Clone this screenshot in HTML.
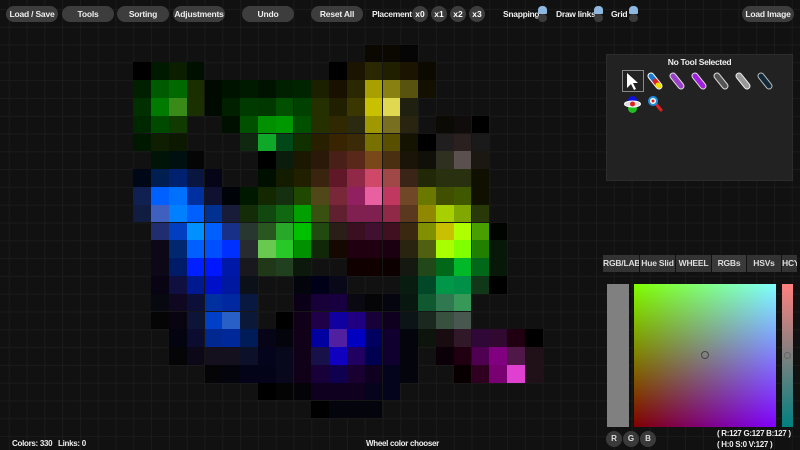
<!DOCTYPE html>
<html><head><meta charset="utf-8">
<style>
*{margin:0;padding:0;box-sizing:border-box}
html,body{width:800px;height:450px;overflow:hidden;background:#111;font-family:"Liberation Sans",sans-serif;color:#fff}
#bg{position:absolute;left:0;top:0;width:800px;height:450px;
background-image:linear-gradient(to right,#1b1b1b 1px,transparent 1px),linear-gradient(to bottom,#1b1b1b 1px,transparent 1px);
background-size:17.8px 17.8px;background-position:133.3px 62.3px}
.btn{position:absolute;top:6px;height:16px;border-radius:8px;background:#3d3d3d;font-size:8.5px;font-weight:bold;text-align:center;line-height:16px;color:#eee;white-space:nowrap;overflow:visible;letter-spacing:-0.2px}
.c{position:absolute;top:6px;width:16px;height:16px;border-radius:8px;background:#3d3d3d;font-size:8.5px;font-weight:bold;text-align:center;line-height:16px;white-space:nowrap}
.t{position:absolute;font-size:8.5px;font-weight:bold;color:#eee;white-space:nowrap;letter-spacing:-0.3px}
.tog{position:absolute;top:6px;width:9px;height:16px}
.tog i{display:block;width:9px;height:8px;background:#8fb8e0;border-radius:4px 4px 1px 1px}
.tog b{display:block;width:9px;height:8px;background:#3a3a3a;border-radius:4px}
.cell{position:absolute;width:17.8px;height:17.8px}
.tab{position:absolute;top:255px;height:17px;background:#333;font-size:8.5px;font-weight:bold;text-align:center;line-height:17px;color:#ddd;white-space:nowrap;overflow:hidden;letter-spacing:-0.2px}
.rgb{position:absolute;top:431px;width:16px;height:16px;border-radius:8px;background:#3a3a3a;font-size:8px;font-weight:bold;text-align:center;line-height:16px;color:#ddd}
</style></head><body>
<div id="bg"></div>
<div id="cells"></div>

<div class="btn" style="left:6px;width:52px">Load / Save</div>
<div class="btn" style="left:62px;width:52px">Tools</div>
<div class="btn" style="left:117px;width:52px">Sorting</div>
<div class="btn" style="left:173px;width:52px">Adjustments</div>
<div class="btn" style="left:242px;width:52px">Undo</div>
<div class="btn" style="left:311px;width:52px">Reset All</div>
<div class="t" style="left:372px;top:9px">Placement</div>
<div class="c" style="left:412px">x0</div>
<div class="c" style="left:431px">x1</div>
<div class="c" style="left:450px">x2</div>
<div class="c" style="left:469px">x3</div>
<div class="t" style="left:503px;top:9px">Snapping</div>
<div class="tog" style="left:538px"><i></i><b></b></div>
<div class="t" style="left:556px;top:9px">Draw links</div>
<div class="tog" style="left:594px"><i></i><b></b></div>
<div class="t" style="left:611px;top:9px">Grid</div>
<div class="tog" style="left:629px"><i></i><b></b></div>
<div class="btn" style="left:742px;width:52px">Load Image</div>

<div style="position:absolute;left:606px;top:54px;width:187px;height:127px;background:#222;border:1px solid #2c2c2c"></div>
<div class="t" style="left:606px;width:187px;text-align:center;top:57px">No Tool Selected</div>
<div style="position:absolute;left:622px;top:70px;width:22px;height:22px;border:1px solid #888"></div>
<svg style="position:absolute;left:600px;top:60px" width="200" height="60" viewBox="600 60 200 60">
<path d="M627 73 L627 88 L631 84 L634 90 L636 89 L633 83 L638 83 Z" fill="#fff"/>
<g stroke-linecap="round">
<line x1="651" y1="76" x2="659" y2="86" stroke="#fff" stroke-width="7"/>
<line x1="651" y1="76" x2="659" y2="86" stroke="#1a7ad0" stroke-width="5"/>
<line x1="655" y1="81" x2="659" y2="86" stroke="#e02020" stroke-width="5"/>
<line x1="658" y1="85" x2="659" y2="86" stroke="#f0e000" stroke-width="5"/>
<line x1="673" y1="76" x2="681" y2="86" stroke="#ddd" stroke-width="7"/>
<line x1="673" y1="76" x2="681" y2="86" stroke="#9a40c8" stroke-width="5"/>
<line x1="695" y1="76" x2="703" y2="86" stroke="#ddd" stroke-width="7"/>
<line x1="695" y1="76" x2="703" y2="86" stroke="#a020e0" stroke-width="5"/>
<line x1="717" y1="76" x2="725" y2="86" stroke="#ddd" stroke-width="7"/>
<line x1="717" y1="76" x2="725" y2="86" stroke="#555" stroke-width="5"/>
<line x1="739" y1="76" x2="747" y2="86" stroke="#eee" stroke-width="7"/>
<line x1="739" y1="76" x2="747" y2="86" stroke="#999" stroke-width="5"/>
<line x1="761" y1="76" x2="769" y2="86" stroke="#bbb" stroke-width="7"/>
<line x1="761" y1="76" x2="769" y2="86" stroke="#102838" stroke-width="5"/>
</g>
<rect x="628" y="96" width="9" height="9" rx="4.5" fill="#1010e0"/>
<rect x="628" y="104" width="9" height="9" rx="4.5" fill="#20c020"/>
<ellipse cx="632.5" cy="104" rx="8" ry="3" fill="#ddd" stroke="#fff" stroke-width="1"/>
<circle cx="632.5" cy="104" r="2.5" fill="#e02020"/>
<line x1="656" y1="104" x2="661" y2="110" stroke="#e02020" stroke-width="3" stroke-linecap="round"/>
<circle cx="653" cy="101" r="4" fill="#fff" stroke="#1a90e0" stroke-width="2"/>
<circle cx="653" cy="101" r="1.5" fill="#e02020"/>
</svg>

<div class="tab" style="left:603px;width:36px">RGB/LAB</div>
<div class="tab" style="left:640px;width:35px">Hue Slid</div>
<div class="tab" style="left:676px;width:35px">WHEEL</div>
<div class="tab" style="left:712px;width:34px;background:#3a3a3a">RGBs</div>
<div class="tab" style="left:747px;width:34px">HSVs</div>
<div class="tab" style="left:782px;width:15px">HCY'</div>

<div style="position:absolute;left:607px;top:284px;width:22px;height:143px;background:#808080"></div>
<div style="position:absolute;left:634px;top:284px;width:142px;height:143px;background:linear-gradient(to right,#800000,#8000ff)">
<div style="position:absolute;inset:0;background:linear-gradient(to bottom,#00ff00,#000);mix-blend-mode:screen"></div></div>
<div style="position:absolute;left:701px;top:351px;width:8px;height:8px;border-radius:50%;border:1px solid #444"></div>
<div style="position:absolute;left:782px;top:284px;width:11px;height:143px;background:linear-gradient(to bottom,#ff8080,#008080)"></div>
<div style="position:absolute;left:784px;top:352px;width:7px;height:7px;border-radius:50%;border:1px solid #666"></div>

<div class="rgb" style="left:606px">R</div>
<div class="rgb" style="left:623px">G</div>
<div class="rgb" style="left:640px">B</div>
<div class="t" style="left:717px;top:429px;font-size:8px">( R:127 G:127 B:127 )</div>
<div class="t" style="left:717px;top:440px;font-size:8px">( H:0 S:0 V:127 )</div>
<div class="t" style="left:12px;top:439px;font-size:8px">Colors: 330&nbsp;&nbsp;&nbsp;Links: 0</div>
<div class="t" style="left:366px;top:439px;font-size:8px">Wheel color chooser</div>

<script>
var R={
"-1":{13:"#0a0800",14:"#0a0800",15:"#050505"},
0:["#000","#001a00","#0a1f00","#001000",,,,,,,,"#000","#1a1400","#2a2800","#202000","#1a1400","#0c0a00"],
1:["#002000","#005a00","#006a00","#1a2e00","#000a00","#001200","#001a00","#001200","#002000","#002400","#1a2000","#1a1000","#2a2800","#a8a000","#888010","#585410","#141000"],
2:["#003000","#007a00","#3a8a1a","#1a3000","#000a00","#002000","#003a00","#003800","#005000","#004000","#253000","#202000","#3a3800","#c8c000","#e0d850","#202010"],
3:["#002800","#004a00","#103a00",,,"#001000","#005000","#009000","#009800","#005000","#253000","#302800","#2a2a10","#a09800","#787020","#282410",,"#0c0a05","#100c0c","#000"],
4:["#001800","#0f1e00","#0c1800",,,,"#102810","#10a828","#004818","#103000","#281e00","#382400","#3a2a08","#787000","#585000","#141200","#000","#201e1e","#2a2020","#1a1a1a"],
5:[,"#001408","#001010","#050505",,,,"#000","#0c1c0c","#1a1800","#2a1808","#482018","#5a2818","#784818","#4a3010","#1a1408","#101008","#303020","#5a5050","#1a1810"],
6:["#000818","#001e50","#002070","#081640","#050518",,,"#001000","#141c00","#202000","#3a2410","#601828","#902848","#d04868","#a04848","#3a2418","#202808","#283010","#283010","#101000"],
7:["#102050","#0060ff","#0070ff","#0030a0","#101030","#000408","#001800","#142800","#143010","#204800","#504818","#782838","#902060","#e860a0","#c03860","#704828","#6a7800","#405000","#405800","#101000"],
8:["#101c40","#4060c0","#0080ff","#0060ff","#003090","#181c38","#142c08","#104810","#106810","#00a000","#385010","#602030","#802050","#802050","#902848","#5a3820","#908800","#a8d000","#80a800","#283808"],
9:[,"#202e70","#0040c0","#0090ff","#0060ff","#183088","#283830","#285820","#28a828","#00c000","#204a10","#2a1e18","#3a1020","#401030","#401020","#3a2810","#809000","#c8c000","#b0ff00","#48a000","#000400"],
10:[,"#0c0818","#002870","#0060ff","#0050ff","#0030ff","#282c30","#68c850","#28c828","#009000","#102808","#140800","#200010","#200010","#1a0010","#282410","#506010","#a8ff00","#80ff00","#208000","#081808"],
11:[,"#0c0818","#001c68","#0020ff","#0018ff","#0018a8","#18181e","#203818","#204020","#0c180c",,,"#100000","#100000","#0c0000","#141810","#204818","#006818","#00b828","#006818","#081808"],
12:[,"#080414","#101040","#001890","#0010c8","#0018a0","#0c1018",,,"#04040c","#000018","#080818",,,,"#081c10","#004828","#009848","#009048","#103818","#000"],
13:[,"#080810","#100820","#0c1038","#0030a0","#0028a0","#081840",,,"#0c0018","#180038","#180040","#0a0810","#050508","#050510","#081810","#105830","#307850","#389858"],
14:[,"#050505","#080510","#0c1438","#0040c8","#2860c8","#0c1838",,"#000","#100018","#200048","#1000a0","#200080","#180038","#100020","#0c1418","#1a2820","#385040","#485850"],
15:[,,"#040410","#0c0c30","#002890","#002898","#001c58","#080418","#04040c","#100018","#0000a0","#5020a0","#0000c0","#000060","#100030","#04040c","#0c140c","#180c10","#301828","#300838","#300830","#200010","#000"],
16:[,,"#050508","#0c0818","#14101e","#14101e","#0c1028","#04041c","#08081c","#100018","#181048","#1000c0","#200060","#000050","#100030","#04040c",,"#0c0008","#200010","#500050","#800080","#501848","#201018"],
17:[,,,,"#050508","#04040c","#040418","#040418","#08081c","#100018","#180038","#100050","#180030","#100020","#04041c","#04040c",,,"#080000","#300020","#780070","#e040d0","#201018"],
18:[,,,,,,,"#000","#040404","#040408","#100020","#100020","#100020","#04041c","#04041c"],
19:[,,,,,,,,,,"#000","#04040c","#04040c","#04040c"]
};
var h="";
for(var r in R){var row=R[r];for(var c in row){if(!row[c])continue;
h+='<div class="cell" style="left:'+(133.3+17.8*c).toFixed(1)+'px;top:'+(62.3+17.8*(+r)).toFixed(1)+'px;background:'+row[c]+'"></div>';}}
document.getElementById("cells").innerHTML=h;
</script>
</body></html>
